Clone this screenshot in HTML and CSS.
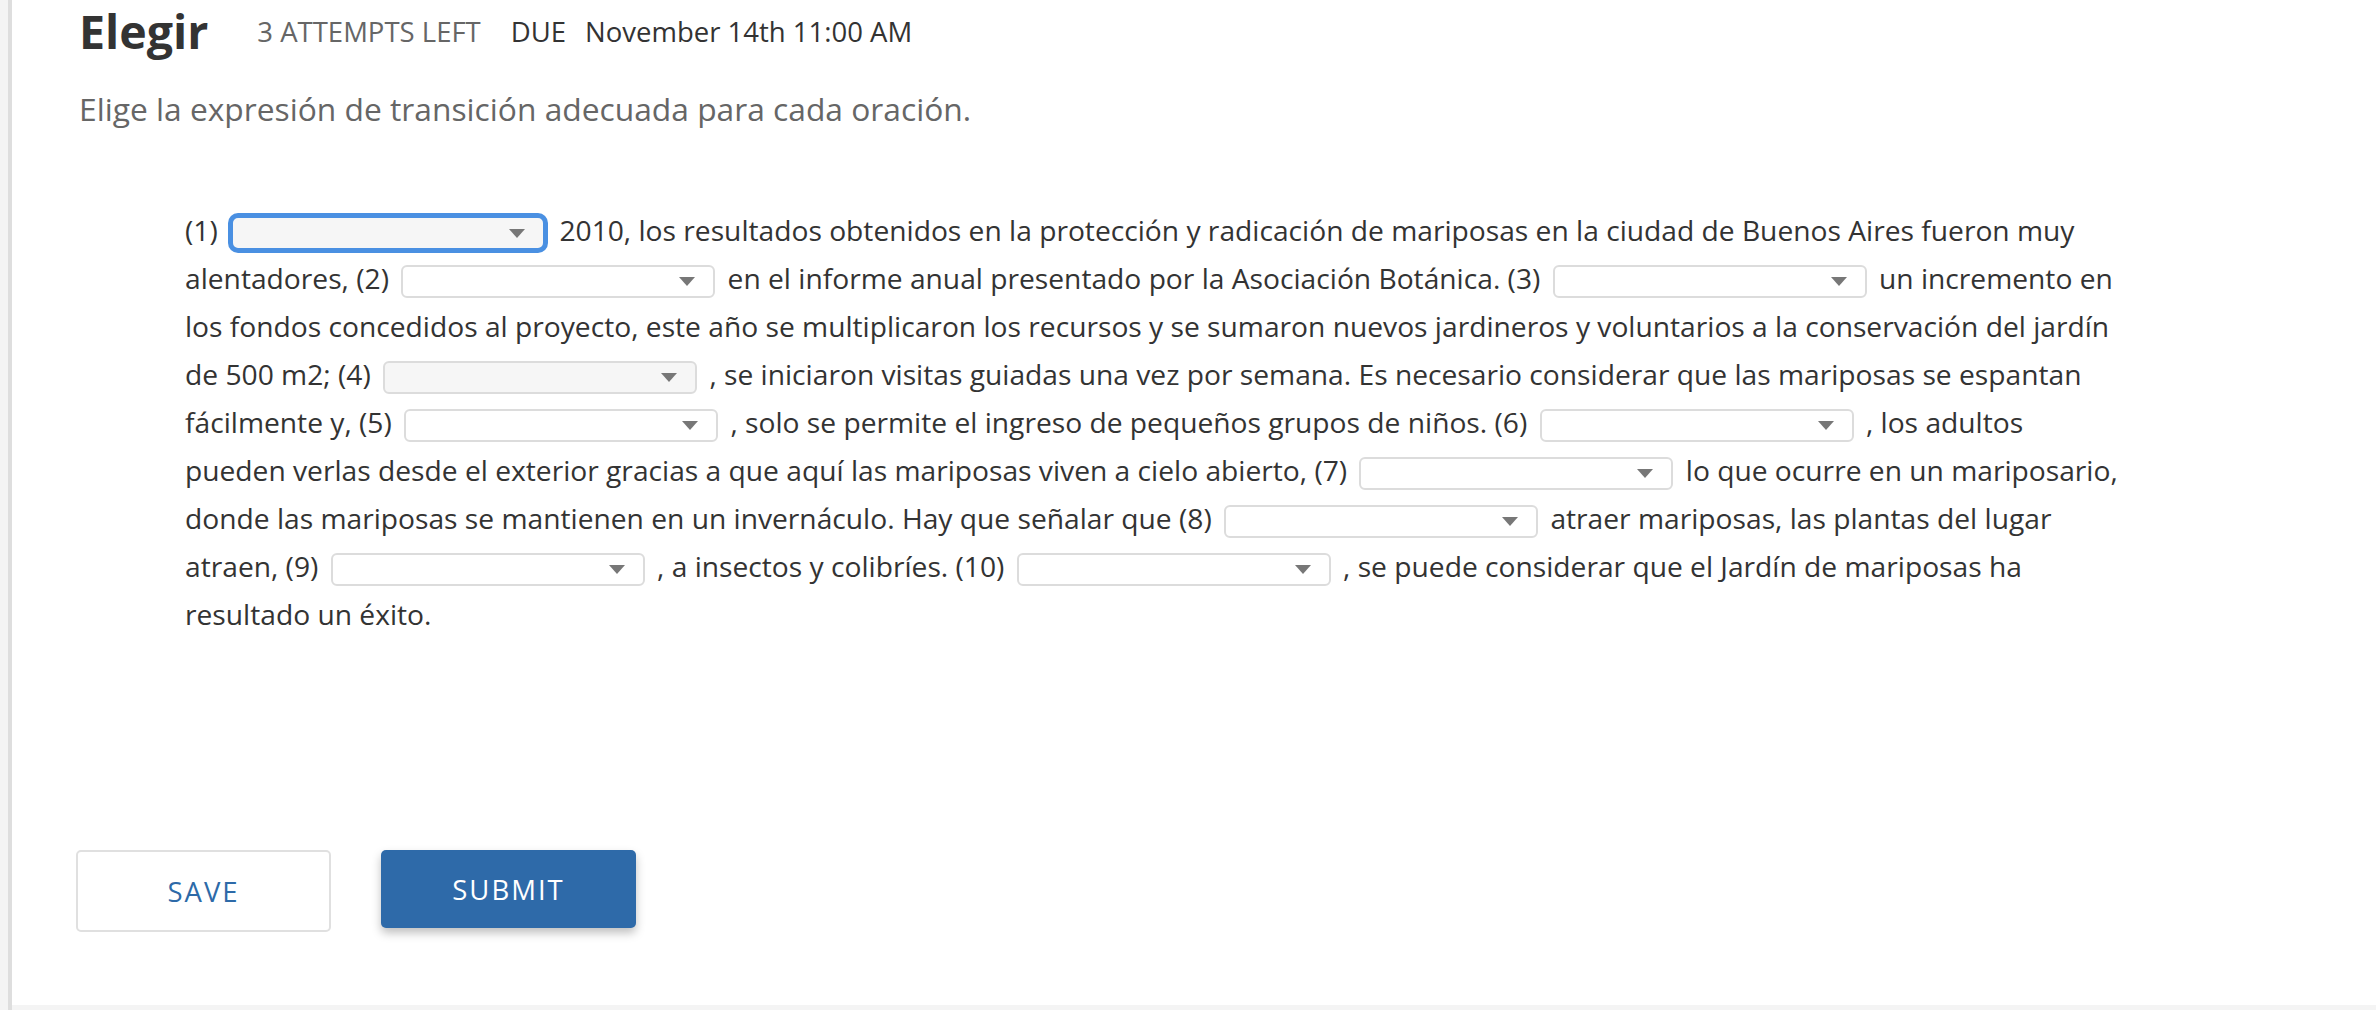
FILE: index.html
```html
<!DOCTYPE html>
<html lang="es">
<head>
<meta charset="utf-8">
<title>Elegir</title>
<link rel="stylesheet" href="styles.css">
</head>
<body>
<div class="frame">
  <main class="panel">
    <header class="head">
      <h1 class="title">Elegir</h1>
      <span class="attempts">3 ATTEMPTS LEFT</span>
      <span class="due-label">DUE</span>
      <span class="due-date">November 14th 11:00 AM</span>
    </header>
    <p class="instructions">Elige la expresión de transición adecuada para cada oración.</p>
    <p class="passage">(1) <span class="select focused"><svg class="caret" viewBox="0 0 16 9"><path d="M0 0H16L8 9Z"/></svg></span> 2010, los resultados obtenidos en la protección y radicación de mariposas en la ciudad de Buenos Aires fueron muy alentadores, (2) <span class="select"><svg class="caret" viewBox="0 0 16 9"><path d="M0 0H16L8 9Z"/></svg></span> en el informe anual presentado por la Asociación Botánica. (3) <span class="select"><svg class="caret" viewBox="0 0 16 9"><path d="M0 0H16L8 9Z"/></svg></span> un incremento en los fondos concedidos al proyecto, este año se multiplicaron los recursos y se sumaron nuevos jardineros y voluntarios a la conservación del jardín de 500 m2; (4) <span class="select hover"><svg class="caret" viewBox="0 0 16 9"><path d="M0 0H16L8 9Z"/></svg></span> , se iniciaron visitas guiadas una vez por semana. Es necesario considerar que las mariposas se espantan fácilmente y, (5) <span class="select"><svg class="caret" viewBox="0 0 16 9"><path d="M0 0H16L8 9Z"/></svg></span> , solo se permite el ingreso de pequeños grupos de niños. (6) <span class="select"><svg class="caret" viewBox="0 0 16 9"><path d="M0 0H16L8 9Z"/></svg></span> , los adultos<br>pueden verlas desde el exterior gracias a que aquí las mariposas viven a cielo abierto, (7) <span class="select"><svg class="caret" viewBox="0 0 16 9"><path d="M0 0H16L8 9Z"/></svg></span> lo que ocurre en un mariposario, donde las mariposas se mantienen en un invernáculo. Hay que señalar que (8) <span class="select"><svg class="caret" viewBox="0 0 16 9"><path d="M0 0H16L8 9Z"/></svg></span> atraer mariposas, las plantas del lugar atraen, (9) <span class="select"><svg class="caret" viewBox="0 0 16 9"><path d="M0 0H16L8 9Z"/></svg></span> , a insectos y colibríes. (10) <span class="select"><svg class="caret" viewBox="0 0 16 9"><path d="M0 0H16L8 9Z"/></svg></span> , se puede considerar que el Jardín de mariposas ha resultado un éxito.</p>
    <div class="actions">
      <button class="btn btn-save" type="button">SAVE</button>
      <button class="btn btn-submit" type="button">SUBMIT</button>
    </div>
  </main>
</div>
</body>
</html>
```
FILE: styles.css
```css
html, body {
  margin: 0;
  padding: 0;
}
body {
  background: #f4f4f4;
  font-family: "Open Sans", "Noto Sans", sans-serif;
  color: #333;
}
.frame {
  margin-left: 8px;
  border-left: 4px solid #dedede;
  height: 1010px;
}
.panel {
  background: #fff;
  height: 1005px;
  box-sizing: border-box;
  padding-left: 67px;
}
.head {
  display: flex;
  align-items: center;
  height: 62px;
}
.title {
  margin: 0;
  font-size: 46.5px;
  font-weight: 700;
  line-height: 62px;
  color: #333;
}
.attempts {
  margin-left: 49px;
  font-size: 27.5px;
  color: #666;
}
.due-label {
  margin-left: 30px;
  font-size: 27.5px;
  color: #333;
}
.due-date {
  margin-left: 19px;
  font-size: 27.5px;
  color: #333;
}
.instructions {
  margin: 25px 0 0;
  font-size: 31.75px;
  color: #666;
}
.passage {
  margin: 76px 0 0 106px;
  max-width: 1945px;
  font-size: 28.2px;
  line-height: 48px;
  color: #333;
}
.select {
  display: inline-flex;
  align-items: center;
  justify-content: flex-end;
  box-sizing: border-box;
  width: 314px;
  height: 33px;
  margin: 0 5px;
  padding-right: 18px;
  border: 2px solid #dcdcdc;
  border-radius: 6px;
  background: #fff;
  vertical-align: middle;
}
.select.hover {
  background: #f6f6f6;
}
.select.focused {
  width: 316px;
  height: 36px;
  margin: 0 6px 0 5px;
  border: 3px solid #4a90e2;
  border-radius: 8px;
  box-shadow: 0 0 0 2px #4a90e2;
  background: #f6f6f6;
}
.caret {
  width: 16px;
  height: 9px;
  fill: #777;
}
.actions {
  display: flex;
  gap: 50px;
  margin-top: 212px;
  margin-left: -3px;
}
.btn {
  box-sizing: border-box;
  width: 255px;
  height: 82px;
  border-radius: 5px;
  font-family: "Open Sans", "Noto Sans", sans-serif;
  font-size: 27.5px;
  letter-spacing: 2px;
  cursor: pointer;
}
.btn-save {
  border: 2px solid #e0e0e0;
  background: #fff;
  color: #2d6aa8;
}
.btn-submit {
  height: 78px;
  border: none;
  background: #2e6aa9;
  color: #fff;
  box-shadow: 0 5px 10px rgba(0, 0, 0, 0.25);
}
```
